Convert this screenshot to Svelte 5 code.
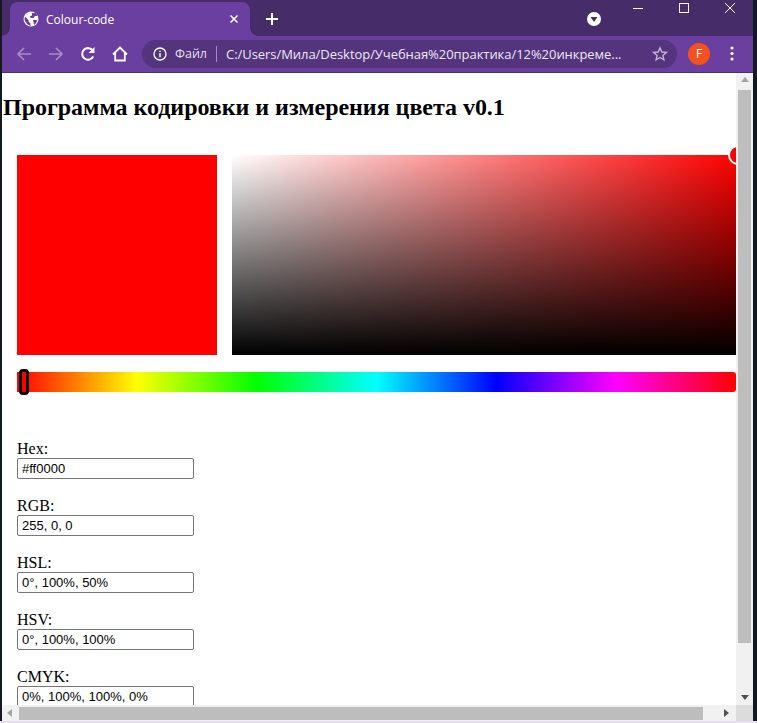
<script>
  const fields = [
    { label: "Hex:", value: "#ff0000" },
    { label: "RGB:", value: "255, 0, 0" },
    { label: "HSL:", value: "0°, 100%, 50%" },
    { label: "HSV:", value: "0°, 100%, 100%" },
    { label: "CMYK:", value: "0%, 100%, 100%, 0%" }
  ];
</script>

<div class="window">
  <header class="titlebar">
    <div class="tab">
      <svg class="globe" viewBox="0 0 16 16" width="16" height="16">
        <circle cx="8" cy="8" r="7.5" fill="#fff" />
        <path d="M2 5.500 5.500 9v1.500L7.500 12.500V15L4 13 1.500 9ZM9 2h4l1.500 3H12L10.500 7H8L6.500 5.500 9 4.500ZM10 9h4l-.5 2.500L11 14l-.5-3Z" fill="#6b3fa0" />
      </svg>
      <span class="tab-title">Colour-code</span>
      <svg class="tab-close" viewBox="0 0 10 10" width="10" height="10">
        <path d="M1.500 1.500l7 7M8.500 1.500l-7 7" stroke="#fff" stroke-width="1.500" />
      </svg>
    </div>
    <svg class="new-tab" viewBox="0 0 14 14" width="14" height="14">
      <path d="M7 1v12M1 7h12" stroke="#fff" stroke-width="2" />
    </svg>
    <div class="spacer"></div>
    <div class="tab-search">
      <svg viewBox="0 0 14 14" width="14" height="14">
        <circle cx="7" cy="7" r="7" fill="#fff" />
        <path d="M3.500 5h7L7 10Z" fill="#462c69" />
      </svg>
    </div>
    <div class="win-controls">
      <svg viewBox="0 0 12 12" width="12" height="12"><path d="M1 6.500h10" stroke="#fff" /></svg>
      <svg viewBox="0 0 12 12" width="12" height="12"><rect x="1.500" y="1.500" width="9" height="9" fill="none" stroke="#fff" /></svg>
      <svg viewBox="0 0 12 12" width="12" height="12"><path d="M1 1l10 10M11 1L1 11" stroke="#fff" /></svg>
    </div>
  </header>

  <nav class="toolbar">
    <svg class="nav dim" viewBox="0 0 16 16" width="16" height="16">
      <path d="M15 8H2M8 2 2 8l6 6" fill="none" stroke="#a68cc6" stroke-width="1.700" />
    </svg>
    <svg class="nav dim" viewBox="0 0 16 16" width="16" height="16">
      <path d="M1 8h13M8 2l6 6-6 6" fill="none" stroke="#a68cc6" stroke-width="1.700" />
    </svg>
    <svg class="nav" viewBox="0 0 16 16" width="16" height="16">
      <path d="M13.200 10.500A5.800 5.800 0 1 1 13 5" fill="none" stroke="#fff" stroke-width="2" />
      <path d="M14.500 1v6h-6Z" fill="#fff" />
    </svg>
    <svg class="nav" viewBox="0 0 16 16" width="16" height="16">
      <path d="M1 8.500 8 1.500l7 7M3.200 7v7.500h9.600V7" fill="none" stroke="#fff" stroke-width="1.800" />
    </svg>
    <div class="omnibox">
      <svg viewBox="0 0 14 14" width="14" height="14">
        <circle cx="7" cy="7" r="6" fill="none" stroke="#fff" stroke-width="1.300" />
        <path d="M7 6v4.200M7 3.700v1.300" stroke="#fff" stroke-width="1.400" />
      </svg>
      <span class="scheme">Файл</span>
      <span class="divider"></span>
      <span class="url">C:/Users/Мила/Desktop/Учебная%20практика/12%20инкреме...</span>
      <svg class="star" viewBox="0 0 16 16" width="16" height="16">
        <path d="M8 1.800 9.800 6l4.600.4-3.500 3 1 4.500L8 11.500l-3.900 2.400 1-4.500-3.500-3L6.200 6Z" fill="none" stroke="#c3b2d8" stroke-width="1.400" />
      </svg>
    </div>
    <div class="avatar">F</div>
    <svg class="menu" viewBox="0 0 4 15" width="4" height="15">
      <circle cx="2" cy="2" r="1.600" fill="#fff" />
      <circle cx="2" cy="7.500" r="1.600" fill="#fff" />
      <circle cx="2" cy="13" r="1.600" fill="#fff" />
    </svg>
  </nav>

  <div class="browser">
    <div class="viewport">
      <main class="page">
        <h1>Программа кодировки и измерения цвета v0.1</h1>
        <div class="pickers">
          <div class="swatch"></div>
          <div class="sv">
            <span class="sv-thumb"></span>
          </div>
        </div>
        <div class="hue">
          <span class="hue-thumb"></span>
        </div>
        <div class="fields">
          {#each fields as f}
            <label class="field">
              <span>{f.label}</span>
              <input type="text" value={f.value} readonly />
            </label>
          {/each}
        </div>
      </main>
      <div class="vbar">
        <span class="arrow up"></span>
        <div class="vtrack"><div class="vthumb"></div></div>
        <span class="arrow down"></span>
      </div>
    </div>
    <div class="hbar">
      <span class="arrow left"></span>
      <div class="htrack"><div class="hthumb"></div></div>
      <span class="arrow right"></span>
      <span class="corner"></span>
    </div>
  </div>
</div>

<style>
  :global(body) {
    margin: 0;
    background: #e6e0ee;
  }
  .window {
    width: 757px;
    height: 721px;
    box-sizing: border-box;
    display: flex;
    flex-direction: column;
    overflow: hidden;
    border-left: 2px solid #14181f;
    border-right: 4px solid #14181f;
    font-family: "Open Sans", "Noto Sans", sans-serif;
    color: #fff;
  }
  .titlebar {
    height: 36px;
    flex: none;
    display: flex;
    align-items: flex-end;
    padding-left: 8px;
    background: #462c69;
    box-sizing: border-box;
  }
  .tab {
    position: relative;
    width: 240px;
    height: 34px;
    box-sizing: border-box;
    display: flex;
    align-items: center;
    padding: 0 11px 0 13px;
    gap: 7px;
    background: #6b3fa0;
    border-radius: 8px 8px 0 0;
  }
  .tab::before,
  .tab::after {
    content: "";
    position: absolute;
    bottom: 0;
    width: 8px;
    height: 8px;
  }
  .tab::before {
    left: -8px;
    background: radial-gradient(circle at 0 0, transparent 7.500px, #6b3fa0 8px);
  }
  .tab::after {
    right: -8px;
    background: radial-gradient(circle at 100% 0, transparent 7.500px, #6b3fa0 8px);
  }
  .tab-title {
    flex: 1;
    font-size: 12px;
  }
  .new-tab {
    margin: 0 0 10px 15px;
  }
  .spacer {
    flex: 1;
  }
  .tab-search {
    height: 14px;
    margin: 0 152px 10px 0;
    display: flex;
  }
  .win-controls {
    position: absolute;
    top: 2px;
    right: 0;
    display: flex;
    gap: 34px;
    padding-right: 21px;
  }
  .toolbar {
    height: 37px;
    flex: none;
    box-sizing: border-box;
    display: flex;
    align-items: center;
    padding: 0 0 1px 14px;
    background: #6b3fa0;
    border-bottom: 1px solid #46306a;
  }
  .nav {
    margin-right: 16px;
    flex: none;
  }
  .nav:nth-of-type(4) {
    margin-right: 14px;
  }
  .omnibox {
    width: 535px;
    height: 28px;
    flex: none;
    box-sizing: border-box;
    display: flex;
    align-items: center;
    padding: 0 9px 0 11px;
    background: #54347d;
    border-radius: 14px;
    font-size: 13px;
    white-space: nowrap;
  }
  .scheme {
    margin-left: 8px;
    font-size: 12.500px;
    color: #e6dff0;
  }
  .divider {
    width: 1px;
    height: 16px;
    margin: 0 9px;
    background: #a68cc6;
  }
  .url {
    flex: 1;
    font-size: 13px;
    letter-spacing: -0.05px;
    color: #eee8f5;
  }
  .avatar {
    width: 22px;
    height: 22px;
    margin-left: 11px;
    flex: none;
    border-radius: 50%;
    background: #f4511e;
    font-size: 12px;
    line-height: 22px;
    text-align: center;
  }
  .menu {
    margin-left: 20px;
  }
  .browser {
    flex: 1;
    min-height: 0;
    display: flex;
    flex-direction: column;
    background: #fff;
  }
  .viewport {
    flex: 1;
    min-height: 0;
    display: flex;
  }
  .page {
    flex: 1;
    min-width: 0;
    overflow: hidden;
    color: #000;
    font-family: "Liberation Serif", serif;
    font-size: 16px;
  }
  h1 {
    margin: 21px 0 34px 1px;
    font-size: 24px;
    line-height: 27px;
    letter-spacing: -0.03px;
    white-space: nowrap;
  }
  .pickers {
    display: flex;
    gap: 15px;
    padding-left: 15px;
  }
  .swatch {
    width: 200px;
    height: 200px;
    flex: none;
    background: #f00;
  }
  .sv {
    position: relative;
    flex: none;
    width: 508px;
    height: 200px;
    background: linear-gradient(to top, #000, transparent), linear-gradient(to right, #fff, #f00);
  }
  .sv-thumb {
    position: absolute;
    top: -10px;
    left: 496px;
    width: 16px;
    height: 16px;
    border: 2px solid #fff;
    border-radius: 50%;
    background: #f00;
  }
  .hue {
    position: relative;
    height: 20px;
    margin: 17px 0 0 15px;
    border-radius: 0 3px 3px 0;
    background: linear-gradient(to right, #f00, #ff0 16.67%, #0f0 33.33%, #0ff 50%, #00f 66.67%, #f0f 83.33%, #f00);
  }
  .hue-thumb {
    position: absolute;
    top: -3px;
    left: 2px;
    width: 4px;
    height: 20px;
    border: 3px solid #000;
    border-radius: 4px;
    background: #f00;
  }
  .fields {
    display: flex;
    flex-direction: column;
    gap: 18px;
    padding: 48px 0 0 15px;
  }
  .field {
    display: flex;
    flex-direction: column;
    align-items: flex-start;
    line-height: 18px;
  }
  input {
    width: 177px;
    height: 21px;
    box-sizing: border-box;
    margin: 0;
    padding: 1px 4px;
    border: 1px solid #767676;
    border-radius: 2px;
    font-family: "Liberation Sans", sans-serif;
    font-size: 13px;
    color: #000;
    background: #fff;
    outline: none;
  }
  .vbar {
    width: 17px;
    flex: none;
    display: flex;
    flex-direction: column;
    align-items: center;
    background: #f1f1f1;
  }
  .vtrack {
    flex: 1;
    width: 100%;
    box-sizing: border-box;
    padding: 8px 2px 52px;
    display: flex;
  }
  .vthumb {
    flex: 1;
    background: #bdbdbd;
  }
  .hbar {
    height: 16px;
    flex: none;
    display: flex;
    align-items: center;
    background: #f1f1f1;
  }
  .htrack {
    flex: 1;
    height: 100%;
    box-sizing: border-box;
    padding: 2px 0 1px;
    display: flex;
  }
  .hthumb {
    width: 684px;
    margin-left: 7px;
    background: #bdbdbd;
  }
  .corner {
    width: 17px;
    height: 100%;
    flex: none;
    background: #dcdcdc;
  }
  .arrow {
    width: 0;
    height: 0;
    flex: none;
    border: 4px solid transparent;
  }
  .arrow.up {
    margin-top: 4px;
    border-top-width: 0;
    border-bottom: 5px solid #a3a3a3;
  }
  .arrow.down {
    margin-bottom: 5px;
    border-bottom-width: 0;
    border-top: 5px solid #505050;
  }
  .arrow.left {
    margin-left: 5px;
    border-left-width: 0;
    border-right: 5px solid #a3a3a3;
  }
  .arrow.right {
    margin: 0 7px 0 5px;
    border-right-width: 0;
    border-left: 5px solid #505050;
  }
</style>
